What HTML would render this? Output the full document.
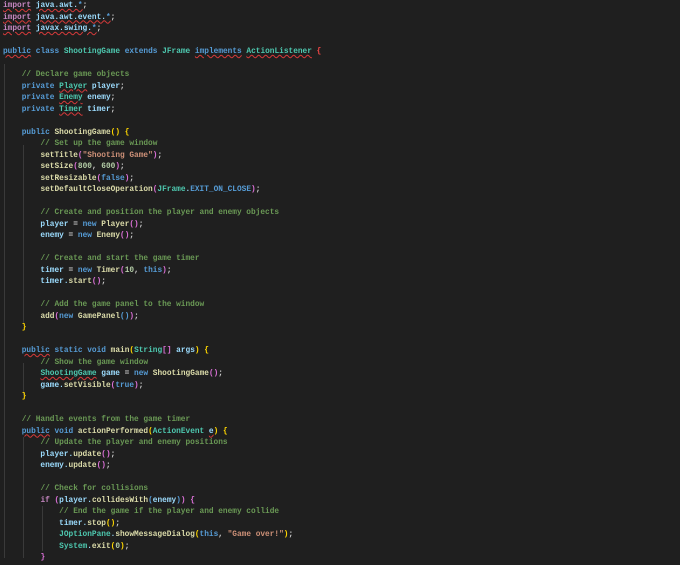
<!DOCTYPE html><html><head><style>
html,body{margin:0;padding:0;background:#1f1f1f;width:680px;height:558px;overflow:hidden}
pre{margin:0;position:absolute;left:3px;top:1px;font-family:"Liberation Mono",monospace;font-size:7.8px;line-height:11.5px;font-weight:bold;color:#9cdcfe}
.k{color:#569cd6}.p{color:#c586c0}.t{color:#4ec9b0}.c{color:#6a9955}.f{color:#dcdcaa}.s{color:#ce9178}.y{color:#ffd700}.m{color:#da70d6}.n{color:#b5cea8}.w{color:#d4d4d4}.r{color:#f44747}
.u{text-decoration:underline wavy #d73a3a;text-decoration-thickness:0.6px;text-underline-offset:1px}
.g{position:absolute;width:1px;background:#3a3a3a}
</style></head><body>
<div class="g" style="left:4px;top:64px;height:494px"></div>
<div class="g" style="left:23px;top:145px;height:178px"></div>
<div class="g" style="left:23px;top:363px;height:33px"></div>
<div class="g" style="left:23px;top:437px;height:121px"></div>
<div class="g" style="left:42px;top:506px;height:45px"></div>
<pre><span class="p u">import</span> <span class="u">java.awt.</span><span class="k u">*</span><span class="w">;</span>
<span class="p u">import</span> <span class="u">java.awt.event.</span><span class="k u">*</span><span class="w">;</span>
<span class="p u">import</span> <span class="u">javax.swing.</span><span class="k u">*</span><span class="w">;</span>

<span class="k u">public</span> <span class="k">class</span> <span class="t">ShootingGame</span> <span class="k">extends</span> <span class="t">JFrame</span> <span class="k u">implements</span> <span class="t u">ActionListener</span> <span class="r">{</span>

    <span class="c">// Declare game objects</span>
    <span class="k">private</span> <span class="t u">Player</span> player<span class="w">;</span>
    <span class="k">private</span> <span class="t u">Enemy</span> enemy<span class="w">;</span>
    <span class="k">private</span> <span class="t u">Timer</span> timer<span class="w">;</span>

    <span class="k">public</span> <span class="f">ShootingGame</span><span class="y">()</span> <span class="y">{</span>
        <span class="c">// Set up the game window</span>
        <span class="f">setTitle</span><span class="m">(</span><span class="s">"Shooting Game"</span><span class="m">)</span><span class="w">;</span>
        <span class="f">setSize</span><span class="m">(</span><span class="n">800</span><span class="w">, </span><span class="n">600</span><span class="m">)</span><span class="w">;</span>
        <span class="f">setResizable</span><span class="m">(</span><span class="k">false</span><span class="m">)</span><span class="w">;</span>
        <span class="f">setDefaultCloseOperation</span><span class="m">(</span><span class="t">JFrame</span>.<span class="k">EXIT_ON_CLOSE</span><span class="m">)</span><span class="w">;</span>

        <span class="c">// Create and position the player and enemy objects</span>
        player <span class="w">=</span> <span class="k">new</span> <span class="f">Player</span><span class="m">()</span><span class="w">;</span>
        enemy <span class="w">=</span> <span class="k">new</span> <span class="f">Enemy</span><span class="m">()</span><span class="w">;</span>

        <span class="c">// Create and start the game timer</span>
        timer <span class="w">=</span> <span class="k">new</span> <span class="f">Timer</span><span class="m">(</span><span class="n">10</span><span class="w">, </span><span class="k">this</span><span class="m">)</span><span class="w">;</span>
        timer.<span class="f">start</span><span class="m">()</span><span class="w">;</span>

        <span class="c">// Add the game panel to the window</span>
        <span class="f">add</span><span class="m">(</span><span class="k">new</span> <span class="f">GamePanel</span><span class="k">()</span><span class="m">)</span><span class="w">;</span>
    <span class="y">}</span>

    <span class="k u">public</span> <span class="k">static</span> <span class="k">void</span> <span class="f">main</span><span class="y">(</span><span class="t">String</span><span class="m">[]</span> args<span class="y">)</span> <span class="y">{</span>
        <span class="c">// Show the game window</span>
        <span class="t u">ShootingGame</span> game <span class="w">=</span> <span class="k">new</span> <span class="f">ShootingGame</span><span class="m">()</span><span class="w">;</span>
        game.<span class="f">setVisible</span><span class="m">(</span><span class="k">true</span><span class="m">)</span><span class="w">;</span>
    <span class="y">}</span>

    <span class="c">// Handle events from the game timer</span>
    <span class="k u">public</span> <span class="k">void</span> <span class="f">actionPerformed</span><span class="y">(</span><span class="t">ActionEvent</span> <span class="u">e</span><span class="y">)</span> <span class="y">{</span>
        <span class="c">// Update the player and enemy positions</span>
        player.<span class="f">update</span><span class="m">()</span><span class="w">;</span>
        enemy.<span class="f">update</span><span class="m">()</span><span class="w">;</span>

        <span class="c">// Check for collisions</span>
        <span class="p">if</span> <span class="m">(</span>player.<span class="f">collidesWith</span><span class="k">(</span>enemy<span class="k">)</span><span class="m">)</span> <span class="m">{</span>
            <span class="c">// End the game if the player and enemy collide</span>
            timer.<span class="f">stop</span><span class="y">()</span><span class="w">;</span>
            <span class="t">JOptionPane</span>.<span class="f">showMessageDialog</span><span class="y">(</span><span class="k">this</span><span class="w">, </span><span class="s">"Game over!"</span><span class="y">)</span><span class="w">;</span>
            <span class="t">System</span>.<span class="f">exit</span><span class="y">(</span><span class="n">0</span><span class="y">)</span><span class="w">;</span>
        <span class="m">}</span></pre>
</body></html>
